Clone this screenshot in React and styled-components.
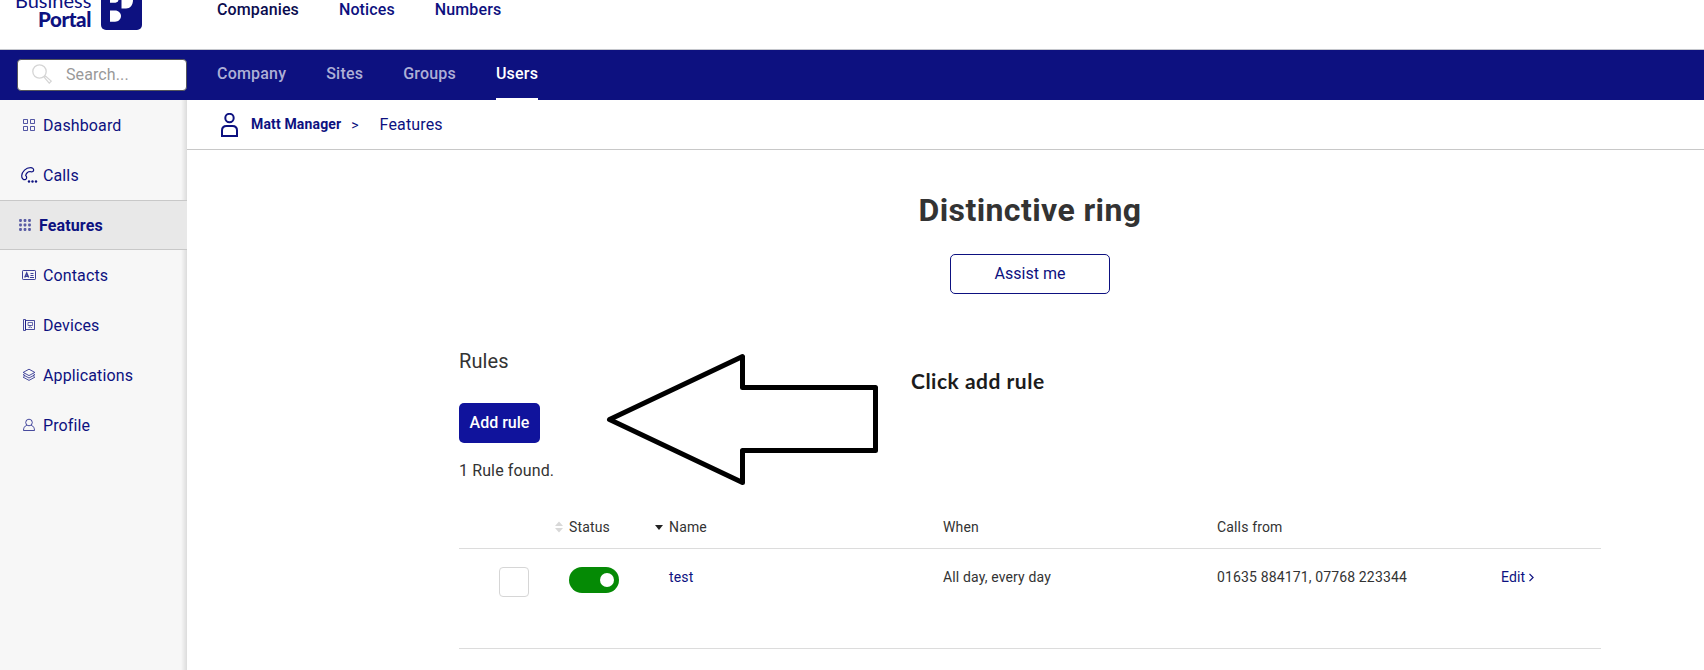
import React from "react";
import styled, { createGlobalStyle } from "styled-components";

const NAVY = "#0d1180";

const Global = createGlobalStyle`
  *, *::before, *::after { box-sizing: border-box; }
  body {
    margin: 0;
    background: #fff;
    overflow: hidden;
    font-family: Roboto, "Liberation Sans", sans-serif;
    font-size: 16px;
    color: #333;
  }
`;

const Page = styled.div`
  height: 670px;
  display: flex;
  flex-direction: column;
  overflow: hidden;
`;

const Header = styled.header`
  height: 50px;
  flex: none;
  display: flex;
  border-bottom: 1px solid #c4c6cc;
`;

const Brand = styled.div`
  width: 217px;
  height: 49px;
  padding-left: 15px;
  display: flex;
  gap: 10px;
  overflow: hidden;
`;

const BrandText = styled.div`
  width: 76px;
  margin-top: -9px;
  text-align: right;
  color: ${NAVY};
  font-family: Lato, sans-serif;
  white-space: nowrap;
`;

const BrandTop = styled.div`
  font-size: 20px;
  line-height: 19px;
`;

const BrandBottom = styled.div`
  font-size: 20.5px;
  line-height: 19px;
  font-weight: 900;
  letter-spacing: -0.4px;
`;

const TopLinks = styled.nav`
  display: flex;
  gap: 40px;
`;

const TopLink = styled.a`
  font-weight: 500;
  line-height: 20px;
  letter-spacing: 0.12px;
  color: ${(p) => (p.$dark ? "#0b0c4e" : NAVY)};
`;

const NavBar = styled.div`
  height: 50px;
  flex: none;
  display: flex;
  align-items: center;
  padding-left: 17px;
  background: ${NAVY};
`;

const Search = styled.div`
  width: 170px;
  height: 32px;
  margin-right: 30px;
  padding: 0 0 2px 14px;
  display: flex;
  align-items: center;
  gap: 14px;
  border: 1px solid #55565c;
  border-radius: 4px;
  background: #fff;
  color: #999;
  letter-spacing: 0.1px;
`;

const NavLinks = styled.nav`
  height: 50px;
  display: flex;
  gap: 40px;
`;

const NavLink = styled.a`
  height: 50px;
  line-height: 47px;
  font-weight: 500;
  letter-spacing: 0.2px;
  color: ${(p) => (p.$active ? "#fff" : "#adafd6")};
  border-bottom: 2px solid ${(p) => (p.$active ? "#fff" : "transparent")};
`;

const Body = styled.div`
  flex: 1;
  display: flex;
`;

const Sidebar = styled.aside`
  width: 187px;
  flex: none;
  background: linear-gradient(to left, #dcdcdc, #f7f7f7 6px);
`;

const SideItem = styled.a`
  height: 50px;
  display: flex;
  align-items: center;
  gap: 5px;
  padding-left: ${(p) => (p.$active ? "16px" : "20px")};
  color: ${NAVY};
  letter-spacing: 0.12px;
  font-weight: ${(p) => (p.$active ? 700 : 400)};
  background: ${(p) => (p.$active ? "#e8e8e8" : "transparent")};
  border: solid ${(p) => (p.$active ? "#c8c8c8" : "transparent")};
  border-width: 1px 0;
  svg { width: 18px; height: 18px; flex: none; }
`;

const Main = styled.main`
  flex: 1;
  min-width: 0;
`;

const Crumbs = styled.div`
  height: 50px;
  display: flex;
  align-items: center;
  padding-left: 34px;
  border-bottom: 1px solid #c8c8c8;
  color: ${NAVY};
`;

const CrumbUser = styled.b`
  margin: -1px 10px 0 13px;
  font-size: 14px;
  font-weight: 700;
  letter-spacing: 0.15px;
`;

const CrumbSep = styled.span`
  margin-right: 21px;
  font-size: 14px;
`;

const CrumbPage = styled.span`
  letter-spacing: 0.15px;
`;

const Content = styled.div`
  position: relative;
  width: 1142px;
  margin-left: 272px;
  display: flex;
  flex-direction: column;
  align-items: flex-start;
`;

const Title = styled.h1`
  align-self: center;
  margin: 40px 0 24px;
  font-size: 32px;
  line-height: 40px;
  font-weight: 700;
  letter-spacing: 0.4px;
`;

const Assist = styled.button`
  align-self: center;
  width: 160px;
  height: 40px;
  padding: 0 0 2px;
  border: 1px solid ${NAVY};
  border-radius: 5px;
  background: #fff;
  color: ${NAVY};
  font: inherit;
`;

const Heading = styled.h2`
  margin: 55px 0 30px;
  font-size: 20px;
  line-height: 24px;
  font-weight: 400;
  letter-spacing: 0.1px;
`;

const AddRule = styled.button`
  width: 81px;
  height: 40px;
  padding: 0 0 2px;
  border: 0;
  border-radius: 5px;
  background: #10139c;
  color: #fff;
  font: inherit;
  font-weight: 500;
`;

const Found = styled.p`
  margin: 18px 0 25px;
  line-height: 20px;
  letter-spacing: 0.12px;
`;

const Annotation = styled.div`
  position: absolute;
  left: 147px;
  top: 203px;
  display: flex;
  gap: 32px;
  svg { flex: none; }
`;

const Note = styled.span`
  margin-top: 16px;
  font-family: Lato, sans-serif;
  font-size: 21px;
  line-height: 24px;
  font-weight: 700;
  letter-spacing: 0.5px;
  white-space: nowrap;
  color: #1c1c1c;
`;

const TableRow = styled.div`
  width: 100%;
  height: ${(p) => (p.$head ? "43px" : "100px")};
  display: grid;
  grid-template-columns: 40px 70px 100px 274px 274px 284px 1fr;
  align-items: start;
  padding-top: ${(p) => (p.$head ? "0" : "18px")};
  border-bottom: 1px solid #dcdcdc;
  font-size: 14px;
`;

const HeadCell = styled.div`
  display: flex;
  align-items: center;
  gap: 6px;
  margin-left: ${(p) => (p.$sort ? "-14px" : "0")};
  line-height: 42px;
  letter-spacing: 0.15px;
`;

const Cell = styled.div`
  line-height: 20px;
  letter-spacing: 0.14px;
  color: ${(p) => (p.$link ? NAVY : "#333")};
`;

const EditLink = styled(Cell)`
  display: flex;
  align-items: center;
  gap: 4px;
`;

const Check = styled.div`
  width: 30px;
  height: 30px;
  border: 1px solid #d6d6d6;
  border-radius: 4px;
`;

const Toggle = styled.div`
  width: 50px;
  height: 26px;
  display: flex;
  justify-content: flex-end;
  align-items: center;
  padding-right: 5px;
  border-radius: 13px;
  background: #058a05;
`;

const Knob = styled.div`
  width: 14px;
  height: 14px;
  border-radius: 50%;
  background: #fff;
`;

const Logo = () => (
  <svg width="41" height="31" viewBox="0 0 41 31">
    <path d="M0 0H41V25a5 5 0 0 1-5 5H5a5 5 0 0 1-5-5Z" fill={NAVY} />
    <g fill="#fff">
      <path d="M9 0H17.500a5 3 0 0 1-3 2.800H9Z" />
      <path d="M20.500 0H32c0 5-3 8.500-7 8.500h-4.500Z" />
      <path d="M9 10.500h5c3.500 0 6 2.500 6 5.500s-2.500 5.700-6 5.700H9Z" />
    </g>
  </svg>
);

const stroke = { fill: "none", stroke: NAVY, strokeWidth: 1 };

const Icon = {
  Dashboard: (
    <svg viewBox="0 0 18 18" {...stroke} strokeOpacity=".7">
      <path d="M3.500 3.500h4v4h-4zM10.500 3.500h4v4h-4zM3.500 10.500h4v4h-4zM10.500 10.500h4v4h-4z" />
    </svg>
  ),
  Calls: (
    <svg viewBox="0 0 18 18" {...stroke} strokeWidth="1.200" strokeLinejoin="round">
      <path d="M5.600 13.400C3.800 14.300 1.500 12.500 1.700 9.800 2 5.500 6 1.700 10.300 1.600c2.200-.1 3.700 1.300 3.300 2.900-.3 1.300-2 1.800-3.500 1C8 5.500 5.900 7.500 5.700 9.500c1.400 1.400 1.200 3.200-.1 3.900Z" />
      <g fill={NAVY} stroke="none">
        <circle cx="9" cy="15.500" r="1.200" /><circle cx="12.500" cy="15.500" r="1.200" /><circle cx="16" cy="15.500" r="1.200" />
      </g>
    </svg>
  ),
  Features: (
    <svg viewBox="0 0 18 18" fill={NAVY} fillOpacity=".65">
      {[4.5, 9, 13.5].map((y) => [4.5, 9, 13.5].map((x) => <rect key={x + "-" + y} x={x - 1.4} y={y - 1.4} width="2.8" height="2.8" rx=".8" />))}
    </svg>
  ),
  Contacts: (
    <svg viewBox="0 0 18 18" {...stroke} strokeOpacity=".8">
      <rect x="2.500" y="4.500" width="13" height="9" rx=".8" />
      <path d="M4.700 11.500 6.700 7l2 4.500M5.500 10.200h2.400" strokeWidth="1.400" />
      <path d="M10.500 7.500h3M10.500 9.500h3M10 11.500h4" />
    </svg>
  ),
  Devices: (
    <svg viewBox="0 0 18 18" {...stroke} strokeOpacity=".75">
      <path d="M3.500 3.500h2v11h-2zM5.500 4.500h9v9h-9z" />
      <path d="M8 6.500h4.500v3H8zM8.500 11.500h1M11 11.500h1M10 9v3" strokeOpacity=".6" />
    </svg>
  ),
  Applications: (
    <svg viewBox="0 0 18 18" {...stroke} strokeOpacity=".75" strokeLinejoin="round">
      <path d="M9 3.200 14.800 6.400 9 9.600 3.200 6.400Z" />
      <path d="M4.500 8 3.200 8.800 9 12l5.800-3.200L13.500 8M4.500 10.400l-1.300.8L9 14.400l5.800-3.200-1.300-.8" />
    </svg>
  ),
  Profile: (
    <svg viewBox="0 0 18 18" {...stroke} strokeOpacity=".75">
      <circle cx="9" cy="6.500" r="3.300" />
      <path d="M6.800 9.300C4.500 10 3.500 12 3.500 14.500h11c0-2.500-1-4.500-3.300-5.200" />
    </svg>
  ),
};

const UserIcon = () => (
  <svg width="17" height="24" viewBox="0 0 17 24" fill="none" stroke={NAVY} strokeWidth="2">
    <circle cx="8.500" cy="5" r="4.200" />
    <path d="M1 23v-5.500c0-3 2-4.500 4.500-4.500h6c2.500 0 4.500 1.500 4.500 4.500V23Z" />
  </svg>
);

const SearchIcon = () => (
  <svg width="20" height="20" viewBox="0 0 20 20" fill="none" stroke="#d5d5d5" strokeWidth="1.300">
    <circle cx="7.500" cy="7.500" r="6.700" />
    <path d="m12.300 13.300 1.200-1.200 5.700 5-2 2Z" />
  </svg>
);

const SortBoth = () => (
  <svg width="8" height="12" viewBox="0 0 8 12" fill="#d8d8d8">
    <path d="M0 5 4 .5 8 5ZM0 7h8L4 11.500Z" />
  </svg>
);

const SortDown = () => (
  <svg width="8" height="5" viewBox="0 0 8 5" fill="#222">
    <path d="M0 0h8L4 5Z" />
  </svg>
);

export default function App() {
  return (
    <Page>
      <Global />
      <Header>
        <Brand>
          <BrandText>
            <BrandTop>Business</BrandTop>
            <BrandBottom>Portal</BrandBottom>
          </BrandText>
          <Logo />
        </Brand>
        <TopLinks>
          <TopLink $dark>Companies</TopLink>
          <TopLink>Notices</TopLink>
          <TopLink>Numbers</TopLink>
        </TopLinks>
      </Header>
      <NavBar>
        <Search>
          <SearchIcon />
          Search...
        </Search>
        <NavLinks>
          <NavLink>Company</NavLink>
          <NavLink>Sites</NavLink>
          <NavLink>Groups</NavLink>
          <NavLink $active>Users</NavLink>
        </NavLinks>
      </NavBar>
      <Body>
        <Sidebar>
          {Object.entries(Icon).map(([name, icon]) => (
            <SideItem key={name} $active={name === "Features"}>
              {icon}
              {name}
            </SideItem>
          ))}
        </Sidebar>
        <Main>
          <Crumbs>
            <UserIcon />
            <CrumbUser>Matt Manager</CrumbUser>
            <CrumbSep>&gt;</CrumbSep>
            <CrumbPage>Features</CrumbPage>
          </Crumbs>
          <Content>
            <Title>Distinctive ring</Title>
            <Assist>Assist me</Assist>
            <Heading>Rules</Heading>
            <AddRule>Add rule</AddRule>
            <Found>1 Rule found.</Found>
            <TableRow $head>
              <span />
              <span />
              <HeadCell $sort><SortBoth />Status</HeadCell>
              <HeadCell $sort><SortDown />Name</HeadCell>
              <HeadCell>When</HeadCell>
              <HeadCell>Calls from</HeadCell>
              <span />
            </TableRow>
            <TableRow>
              <span />
              <Check />
              <Toggle><Knob /></Toggle>
              <Cell $link>test</Cell>
              <Cell>All day, every day</Cell>
              <Cell>01635 884171, 07768 223344</Cell>
              <EditLink $link>
                Edit
                <svg width="5" height="9" viewBox="0 0 5 9" fill="none" stroke={NAVY} strokeWidth="1.200">
                  <path d="m.5.800 3.600 3.700L.5 8.200" />
                </svg>
              </EditLink>
            </TableRow>
            <Annotation>
              <svg width="273" height="134" viewBox="606 353 273 134" fill="none" stroke="#000" strokeWidth="5" strokeLinejoin="round">
                <path d="M609.500 419.500 742.500 356.500V387.500H875.500V450.500H742.500V482.500Z" />
              </svg>
              <Note>Click add rule</Note>
            </Annotation>
          </Content>
        </Main>
      </Body>
    </Page>
  );
}
